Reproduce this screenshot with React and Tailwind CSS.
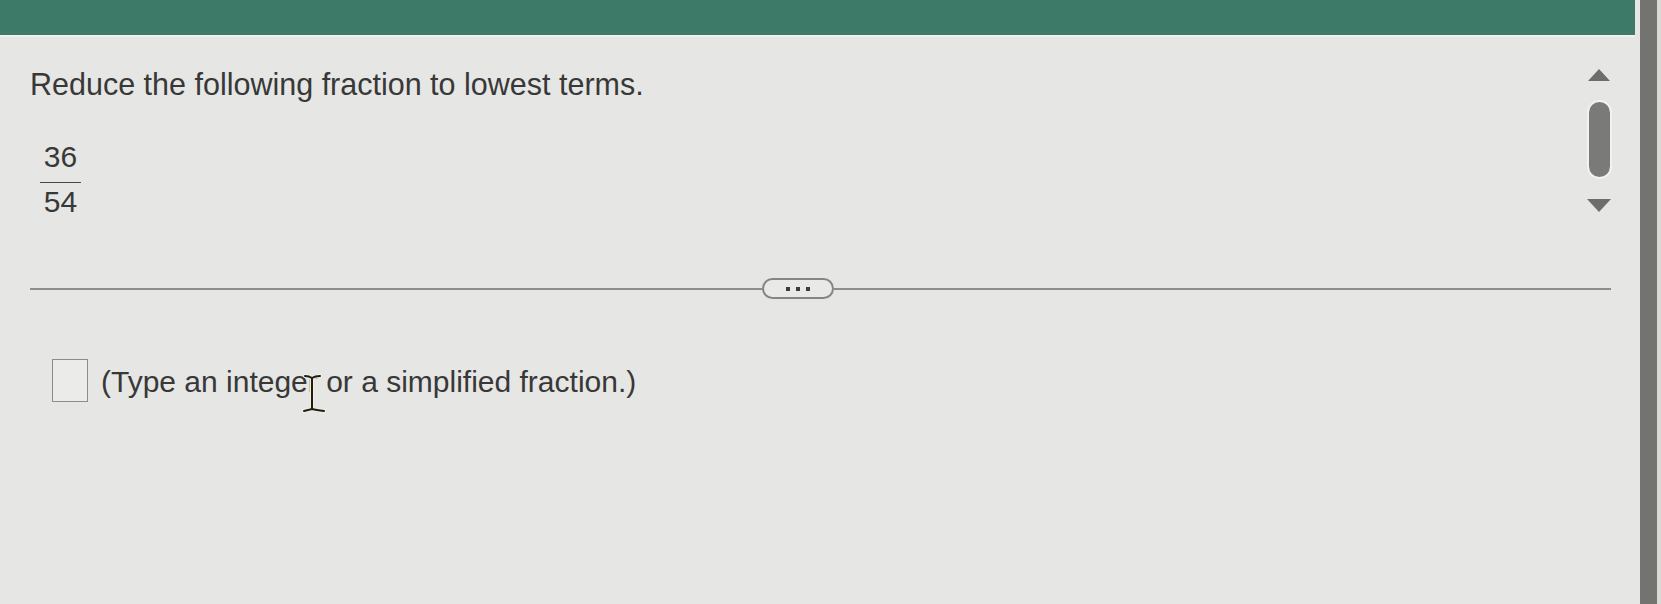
const Fraction = ({ top, bottom }) => {
  return (
    <div className="ml-[10px] flex w-[41px] flex-col items-center text-[30px] leading-[30px]">
      <span className="pb-[10px]">{top}</span>
      <span className="w-full border-t-[1.5px] border-[#4a4a4a] pt-[4px] text-center">{bottom}</span>
    </div>
  );
};

const Divider = () => {
  return (
    <div className="flex h-[21px] items-center">
      <div className="h-[2px] w-[732px] bg-[#8e8e8c]" />
      <button className="flex h-[21px] w-[72px] items-center justify-center gap-[6px] rounded-full border-2 border-[#858583] bg-[#e9e9e7]">
        <span className="h-[4px] w-[4px] bg-[#3c3c3c]" />
        <span className="h-[4px] w-[4px] bg-[#3c3c3c]" />
        <span className="h-[4px] w-[4px] bg-[#3c3c3c]" />
      </button>
      <div className="h-[2px] flex-1 bg-[#8e8e8c]" />
    </div>
  );
};

const ScrollBar = () => {
  return (
    <div className="absolute left-[1585px] top-[69px] flex w-[28px] flex-col items-center">
      <svg width="22" height="12" viewBox="0 0 22 12">
        <polygon points="11,0 22,12 0,12" fill="#6d6d6b" />
      </svg>
      <div className="mt-[21px] h-[75px] w-[21px] rounded-full bg-[#7a7a78] ring-2 ring-[#f2f2f0]" />
      <svg className="mt-[22px]" width="24" height="13" viewBox="0 0 24 13">
        <polygon points="0,0 24,0 12,13" fill="#6d6d6b" />
      </svg>
    </div>
  );
};

const TextCursor = () => {
  return (
    <svg className="absolute left-[302px] top-[374px]" width="24" height="39" viewBox="0 0 24 39">
      <g stroke="#f4f1d8" strokeWidth="4" fill="none" strokeLinecap="round">
        <path d="M3 2 Q7 2 10 4 Q13 2 18 2" />
        <path d="M10 4 V35" />
        <path d="M2 37 Q6 36 10 35 Q14 36 22 37" />
      </g>
      <g stroke="#1c1c1c" strokeWidth="2" fill="none" strokeLinecap="round">
        <path d="M3 2 Q7 2 10 4 Q13 2 18 2" />
        <path d="M10 4 V35" />
        <path d="M2 37 Q6 36 10 35 Q14 36 22 37" />
      </g>
    </svg>
  );
};

const App = () => {
  return (
    <div
      className="relative flex h-[604px] w-full overflow-hidden bg-[#e6e6e4] text-[#383838]"
      style={{ fontFamily: '"Liberation Sans", Arial, sans-serif' }}
    >
      <div className="flex w-[1640px] flex-col">
        <div className="mr-[5px] h-[37px] border-b-2 border-[#f0f0ee] bg-[#3e7a68]" />
        <div className="flex flex-col pl-[30px] pr-[29px]">
          <h1 className="mt-[29px] text-[30.5px] leading-[36px]">Reduce the following fraction to lowest terms.</h1>
          <div className="mt-[40px]">
            <Fraction top="36" bottom="54" />
          </div>
          <div className="mt-[61px]">
            <Divider />
          </div>
          <div className="ml-[22px] mt-[60px] flex items-start gap-[13px]">
            <div className="h-[43px] w-[36px] border-[1.5px] border-[#8c8c8a] bg-[#ebebe9]" />
            <p className="mt-[5px] text-[30px] leading-[36px]">(Type an integer or a simplified fraction.)</p>
          </div>
        </div>
      </div>
      <div className="w-[17px] bg-[#737371]" />
      <div className="flex-1 bg-[#d9d9d5]" />
      <ScrollBar />
      <TextCursor />
    </div>
  );
};

export default App;
